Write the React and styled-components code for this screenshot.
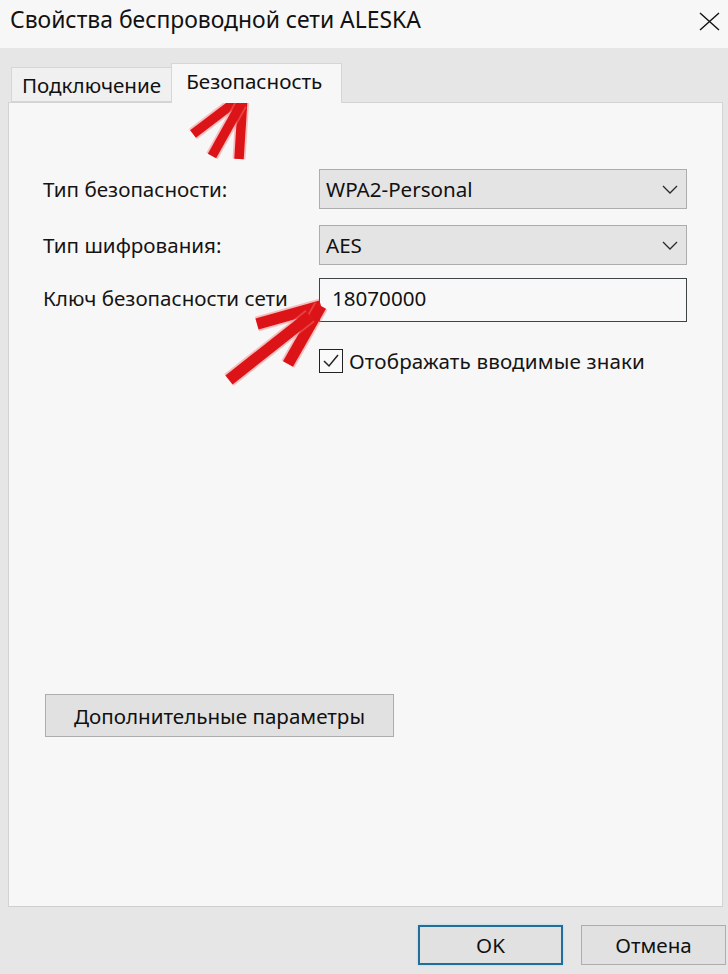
import * as React from "react";
import styled, { createGlobalStyle } from "styled-components";

const GlobalStyle = createGlobalStyle`
  html, body {
    margin: 0;
    padding: 0;
    background: #e6e6e6;
  }
  body {
    font-family: "Noto Sans", "Open Sans", sans-serif;
    color: #1a1a1a;
  }
`;

const Window = styled.div`
  position: relative;
  width: 728px;
  height: 974px;
  display: flex;
  flex-direction: column;
  background: #e7e6e6;
  overflow: hidden;
`;

const TitleBar = styled.div`
  height: 48px;
  flex: none;
  box-sizing: border-box;
  display: flex;
  align-items: center;
  justify-content: space-between;
  padding: 0 8px 9px 10px;
  background: #f7f7f7;
  font-size: 22.9px;
  color: #111;
`;

const CloseButton = styled.div`
  width: 22px;
  height: 22px;
  display: flex;
  align-items: center;
  justify-content: center;
  margin-top: 4px;
`;

const Body = styled.div`
  flex: 1;
  display: flex;
  flex-direction: column;
  padding: 15px 5px 0 8px;
  background: #e6e6e6;
`;

const TabRow = styled.div`
  display: flex;
  align-items: flex-end;
  padding-left: 3px;
  height: 39px;
`;

const Tab = styled.div`
  position: relative;
  display: flex;
  align-items: center;
  box-sizing: border-box;
  height: ${(p) => (p.$active ? "40px" : "35px")};
  margin-bottom: ${(p) => (p.$active ? "-1px" : "0")};
  margin-left: ${(p) => (p.$active ? "-1px" : "0")};
  padding: ${(p) => (p.$active ? "0 19px 6px 14px" : "0 10px 0 10px")};
  border: 1px solid #d6d6d6;
  border-bottom: ${(p) => (p.$active ? "none" : "1px solid #d6d6d6")};
  background: ${(p) => (p.$active ? "#f8f7f7" : "#f0f0f0")};
  z-index: ${(p) => (p.$active ? 2 : 1)};
  font-size: 20.6px;
  color: #111;
`;

const Panel = styled.div`
  flex: 1;
  display: flex;
  flex-direction: column;
  border: 1px solid #d3d3d3;
  border-bottom-color: #cfcfcf;
  background: #f8f7f7;
  padding: 66px 0 0 33px;
`;

const FormRow = styled.div`
  display: grid;
  grid-template-columns: 277px 368px;
  align-items: center;
  margin-top: ${(p) => p.$gap || 0}px;
`;

const Label = styled.div`
  font-size: 20.6px;
  color: #151515;
  padding-left: 1px;
  margin-top: ${(p) => p.$shift || 0}px;
`;

const Select = styled.div`
  box-sizing: border-box;
  height: 40px;
  display: flex;
  align-items: center;
  justify-content: space-between;
  padding: 0 8px 0 6px;
  background: #e4e4e4;
  border: 1px solid #adadad;
  font-size: 20.6px;
  color: #111;
`;

const TextInput = styled.div`
  box-sizing: border-box;
  height: 44px;
  display: flex;
  align-items: center;
  padding: 0 0 4px 12px;
  background: #f8f8f8;
  border: 1.5px solid #3f4447;
  font-size: 20.6px;
  color: #111;
`;

const CheckRow = styled.div`
  grid-column: 2;
  display: flex;
  align-items: center;
  gap: 6px;
  font-size: 20.6px;
  letter-spacing: 0.15px;
  color: #151515;
`;

const CheckBox = styled.div`
  box-sizing: border-box;
  width: 24px;
  height: 24px;
  border: 1.5px solid #222;
  background: #fafafa;
  display: flex;
  align-items: center;
  justify-content: center;
`;

const Button = styled.div`
  box-sizing: border-box;
  width: ${(p) => p.$width}px;
  height: ${(p) => p.$height || 40}px;
  display: flex;
  align-items: center;
  justify-content: center;
  background: #e1e1e1;
  border: ${(p) => (p.$default ? "2px solid #1f6f9a" : "1px solid #adadad")};
  box-shadow: ${(p) => (p.$default ? "0 0 2px #9fd3ec" : "none")};
  font-size: 20.6px;
  color: #111;
`;

const AdvancedButton = styled(Button)`
  margin-top: 319px;
  margin-left: 3px;
`;

const Footer = styled.div`
  height: 67px;
  flex: none;
  box-sizing: border-box;
  display: flex;
  align-items: flex-start;
  justify-content: flex-end;
  gap: 18px;
  padding: 18px 2px 0 0;
  background: #e7e6e6;
`;

const Overlay = styled.svg`
  position: absolute;
  left: 0;
  top: 0;
  pointer-events: none;
`;

function Chevron() {
  return (
    <svg width="16" height="9" viewBox="0 0 16 9">
      <polyline points="1,1 8,8 15,1" fill="none" stroke="#2a2a2a" strokeWidth="1.3" />
    </svg>
  );
}

function RedArrows() {
  const glow = { stroke: "#f27a7a", strokeOpacity: 0.45 };
  const main = { stroke: "#dc1418" };
  const arrow1 = [
    [243, 96, 193, 134],
    [243, 96, 239, 159],
    [241, 104, 212, 156],
  ];
  const arrow2 = [
    [321, 306, 257, 324],
    [321, 306, 288, 364],
    [310, 316, 229, 380],
  ];
  return (
    <Overlay width="728" height="974" viewBox="0 0 728 974">
      {arrow1.map(([x1, y1, x2, y2], i) => (
        <g key={"a" + i}>
          <line x1={x1} y1={y1} x2={x2} y2={y2} strokeWidth="13" {...glow} />
          <line x1={x1} y1={y1} x2={x2} y2={y2} strokeWidth="9.5" {...main} />
        </g>
      ))}
      {arrow2.map(([x1, y1, x2, y2], i) => (
        <g key={"b" + i}>
          <line x1={x1} y1={y1} x2={x2} y2={y2} strokeWidth="15" {...glow} />
          <line x1={x1} y1={y1} x2={x2} y2={y2} strokeWidth="11.5" {...main} />
        </g>
      ))}
    </Overlay>
  );
}

export default function App() {
  return (
    <>
      <GlobalStyle />
      <Window>
        <TitleBar>
          <span>Свойства беспроводной сети ALESKA</span>
          <CloseButton>
            <svg width="21" height="19" viewBox="0 0 21 19">
              <path d="M1 1 L20 18 M20 1 L1 18" stroke="#111" strokeWidth="1.4" fill="none" />
            </svg>
          </CloseButton>
        </TitleBar>

        <Body>
          <TabRow>
            <Tab>Подключение</Tab>
            <Tab $active>Безопасность</Tab>
          </TabRow>

          <Panel>
            <FormRow>
              <Label>Тип безопасности:</Label>
              <Select>
                <span>WPA2-Personal</span>
                <Chevron />
              </Select>
            </FormRow>

            <FormRow $gap={16}>
              <Label>Тип шифрования:</Label>
              <Select>
                <span>AES</span>
                <Chevron />
              </Select>
            </FormRow>

            <FormRow $gap={13}>
              <Label $shift={-4}>Ключ безопасности сети</Label>
              <TextInput>18070000</TextInput>
            </FormRow>

            <FormRow $gap={25}>
              <CheckRow>
                <CheckBox>
                  <svg width="18" height="16" viewBox="0 0 18 16">
                    <polyline points="2,8 7,13 16,2" fill="none" stroke="#222" strokeWidth="1.5" />
                  </svg>
                </CheckBox>
                Отображать вводимые знаки
              </CheckRow>
            </FormRow>

            <AdvancedButton $width={349} $height={43}>
              Дополнительные параметры
            </AdvancedButton>
          </Panel>
        </Body>

        <Footer>
          <Button $default $width={145}>OK</Button>
          <Button $width={145}>Отмена</Button>
        </Footer>

        <RedArrows />
      </Window>
    </>
  );
}
